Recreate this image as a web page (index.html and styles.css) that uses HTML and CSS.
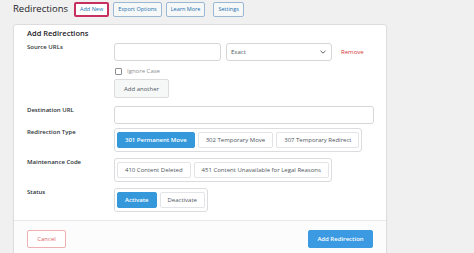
FILE: index.html
```html
<!DOCTYPE html>
<html lang="en">
<head>
<meta charset="utf-8">
<title>Redirections</title>
<link rel="stylesheet" href="styles.css">
</head>
<body>
<div class="page">
  <header class="top">
    <h1 class="title">Redirections</h1>
    <nav class="top-nav">
      <a class="hbtn hbtn-current">Add New</a>
      <a class="hbtn">Export Options</a>
      <a class="hbtn">Learn More</a>
      <a class="hbtn hbtn-last">Settings</a>
    </nav>
  </header>

  <section class="card">
    <div class="card-body">
      <h2 class="card-title">Add Redirections</h2>

      <div class="row row-src">
        <div class="label">Source URLs</div>
        <div class="field">
          <div class="url-line">
            <input class="input input-src" type="text">
            <div class="select">
              <span>Exact</span>
              <svg class="chev" width="6" height="4" viewBox="0 0 6 4"><path d="M0.5 0.8 L3 3.2 L5.5 0.8" fill="none" stroke="#50575e" stroke-width="0.9"/></svg>
            </div>
            <a class="remove">Remove</a>
          </div>
          <label class="check"><span class="box"></span>Ignore Case</label>
          <button class="btn-plain">Add another</button>
        </div>
      </div>

      <div class="row row-dest">
        <div class="label">Destination URL</div>
        <div class="field">
          <input class="input input-dest" type="text">
        </div>
      </div>

      <div class="row row-gap">
        <div class="label">Redirection Type</div>
        <div class="field">
          <div class="group">
            <button class="opt opt-active">301 Permanent Move</button>
            <button class="opt">302 Temporary Move</button>
            <button class="opt">307 Temporary Redirect</button>
          </div>
        </div>
      </div>

      <div class="row row-gap">
        <div class="label">Maintenance Code</div>
        <div class="field">
          <div class="group">
            <button class="opt">410 Content Deleted</button>
            <button class="opt">451 Content Unavailable for Legal Reasons</button>
          </div>
        </div>
      </div>

      <div class="row">
        <div class="label">Status</div>
        <div class="field">
          <div class="group">
            <button class="opt opt-active">Activate</button>
            <button class="opt">Deactivate</button>
          </div>
        </div>
      </div>
    </div>

    <div class="card-foot">
      <button class="btn-cancel">Cancel</button>
      <button class="btn-primary">Add Redirection</button>
    </div>
  </section>
</div>
</body>
</html>
```

FILE: styles.css
```css
* { box-sizing: border-box; }

body {
  margin: 0;
  background: #f0f0f1;
  font-family: "Open Sans", "Noto Sans", sans-serif;
  color: #2c3338;
}

.page {
  padding: 0 0 0 13px;
}

.top {
  display: flex;
  align-items: center;
  height: 18px;
  margin-bottom: 6px;
}

.title {
  margin: 0 6px 0 0;
  font-size: 9.5px;
  font-weight: 400;
  line-height: 18px;
  color: #1d2327;
}

.top-nav {
  display: flex;
  gap: 4px;
}

.hbtn {
  display: flex;
  align-items: center;
  height: 15px;
  padding: 0 4px;
  border: 1px solid #9ab8d4;
  border-radius: 2px;
  background: #f6f7f7;
  font-size: 5.5px;
  color: #2271b1;
}

.hbtn-current {
  border: 2px solid #c7305e;
  background: #fff;
}

.hbtn-last { margin-left: 4px; }

.card {
  width: 374px;
  background: #fff;
  border: 1px solid #dcdcde;
  border-radius: 3px;
  box-shadow: 0 1px 1px rgba(0, 0, 0, 0.04);
}

.card-body {
  padding: 3px 13px 3px;
}

.card-title {
  margin: 0 0 5px;
  font-size: 7.5px;
  font-weight: 600;
  line-height: 10px;
  color: #1d2327;
}

.row {
  display: grid;
  grid-template-columns: 87px 1fr;
  margin-bottom: 5px;
}

.row-src { margin-bottom: 8px; }
.row-dest { margin-bottom: 4px; }
.row-gap { margin-bottom: 6px; }

.label {
  font-size: 6px;
  font-weight: 600;
  line-height: 9px;
  color: #2c3338;
}

.field {
  display: flex;
  flex-direction: column;
  align-items: flex-start;
}

.url-line {
  display: flex;
  align-items: center;
}

.input {
  height: 18px;
  border: 1px solid #d5d6d8;
  border-radius: 3px;
  background: #fff;
  padding: 0 4px;
  font: inherit;
  margin: 0;
}

.input-src { width: 107px; }
.input-dest { width: 260px; }

.select {
  display: flex;
  align-items: center;
  justify-content: space-between;
  width: 106px;
  height: 18px;
  margin-left: 5px;
  padding: 0 5px 0 4px;
  border: 1px solid #d5d6d8;
  border-radius: 3px;
  font-size: 6px;
  color: #50575e;
}

.chev { display: block; }

.remove {
  margin-left: 9px;
  font-size: 6px;
  color: #d63638;
}

.check {
  display: flex;
  align-items: center;
  margin-top: 6px;
  height: 8px;
  font-size: 6px;
  color: #8c8f94;
}

.box {
  width: 7px;
  height: 7px;
  margin: 0 5px 0 1px;
  border: 1px solid #8c8f94;
  border-radius: 1px;
  background: #fff;
}

.btn-plain {
  margin-top: 4px;
  width: 55px;
  height: 19px;
  padding: 0;
  border: 1px solid #dcdcde;
  border-radius: 2px;
  background: #f6f7f7;
  font-family: inherit;
  font-size: 6px;
  color: #50575e;
}

.group {
  display: flex;
  gap: 3px;
  padding: 3px 2px;
  border: 1px solid #dcdcde;
  border-radius: 3px;
  background: #fff;
}

.opt {
  height: 16px;
  padding: 0 7px;
  border: 1px solid #e2e4e7;
  border-radius: 2px;
  background: #fff;
  font-family: inherit;
  font-size: 6px;
  color: #50575e;
}

.opt-active {
  background: #3498db;
  border-color: #3498db;
  color: #fff;
  font-weight: 600;
}

.card-foot {
  display: flex;
  justify-content: space-between;
  padding: 9px 13px;
  border-top: 1px solid #e8e8e8;
  background: #fcfcfc;
}

.btn-cancel {
  width: 39px;
  height: 18px;
  padding: 0;
  border: 1px solid #eeb0b0;
  border-radius: 2px;
  background: #fff;
  font-family: inherit;
  font-size: 6px;
  color: #e06666;
}

.btn-primary {
  width: 65px;
  height: 18px;
  padding: 0;
  border: 1px solid #3b9ae1;
  border-radius: 2px;
  background: #3b9ae1;
  font-family: inherit;
  font-size: 6px;
  font-weight: 600;
  color: #fff;
}
```
